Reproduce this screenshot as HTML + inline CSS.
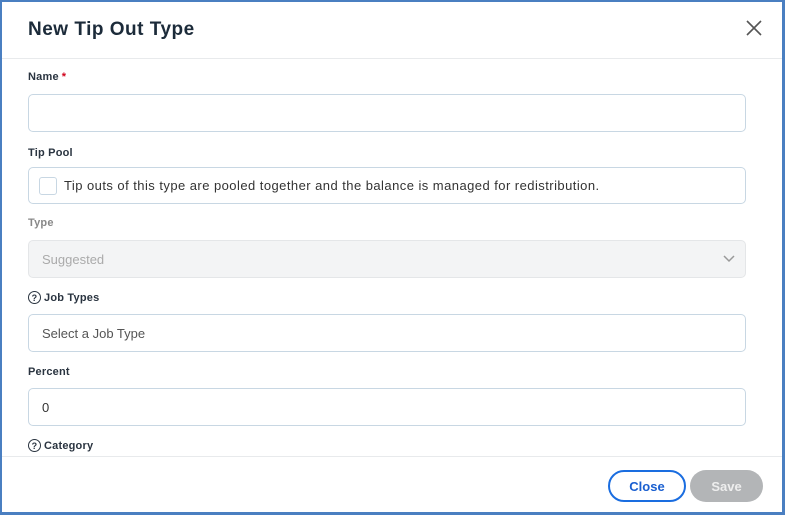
<!DOCTYPE html>
<html><head><style>
*{box-sizing:border-box;margin:0;padding:0}
body{width:785px;height:515px;overflow:hidden;background:#fff;font-family:"Liberation Sans",sans-serif;position:relative}
.frame{position:absolute;left:0;top:0;width:785px;height:515px;border:2px solid #4a7fc1;border-bottom-width:3px;border-right-width:3px}
.t{position:absolute;left:28px;top:19px;font-size:19px;font-weight:bold;color:#1c2b3a;letter-spacing:0.5px}
.x{position:absolute;left:745px;top:19px}
.hl{position:absolute;left:2px;right:3px;height:1px;background:#e8eaec}
.l{position:absolute;left:28px;font-size:11px;font-weight:bold;color:#2a3440;display:flex;align-items:center;gap:3px;letter-spacing:0.2px}
.in{position:absolute;left:28px;width:718px;height:38px;border:1px solid #c8d7e3;border-radius:5px;font-size:13px;color:#555;padding-left:13px;display:flex;align-items:center}
.q{width:13px;height:13px;border:1.5px solid #2a3440;border-radius:50%;font-size:9px;display:flex;align-items:center;justify-content:center}
.btn{position:absolute;top:470px;height:32px;border-radius:16px;font-size:13px;font-weight:bold;display:flex;align-items:center;justify-content:center}
</style></head><body>
<div class="t">New Tip Out Type</div>
<svg class="x" width="18" height="18" viewBox="0 0 18 18"><path d="M2 2L16 16M16 2L2 16" stroke="#555" stroke-width="1.6"/></svg>
<div class="hl" style="top:58px"></div>
<div class="l" style="top:71px">Name <span style="color:#d0021b">*</span></div>
<div class="in" style="top:94px"></div>
<div class="l" style="top:147px">Tip Pool</div>
<div class="in" style="top:167px;height:37px;color:#333;letter-spacing:0.45px"><span style="width:18px;height:18px;border:1px solid #c8d7e3;border-radius:3px;margin-left:-3px;margin-right:7px"></span>Tip outs of this type are pooled together and the balance is managed for redistribution.</div>
<div class="l" style="top:217px;color:#888">Type</div>
<div class="in" style="top:240px;height:38px;background:#f3f4f5;border-color:#e4e6e8;color:#aaa">Suggested
<svg style="position:absolute;right:10px;top:14px" width="12" height="8" viewBox="0 0 12 8"><path d="M1 1L6 6L11 1" stroke="#999" fill="none" stroke-width="1.5"/></svg></div>
<div class="l" style="top:291px"><span class="q">?</span> Job Types</div>
<div class="in" style="top:314px">Select a Job Type</div>
<div class="l" style="top:366px">Percent</div>
<div class="in" style="top:388px;color:#333">0</div>
<div class="l" style="top:439px"><span class="q">?</span> Category</div>
<div class="hl" style="top:456px"></div>
<div class="btn" style="left:608px;width:78px;border:2px solid #1a6de0;color:#1a5fd0">Close</div>
<div class="btn" style="left:690px;width:73px;background:#b3b5b7;color:#eee">Save</div>
<div class="frame"></div>
</body></html>
